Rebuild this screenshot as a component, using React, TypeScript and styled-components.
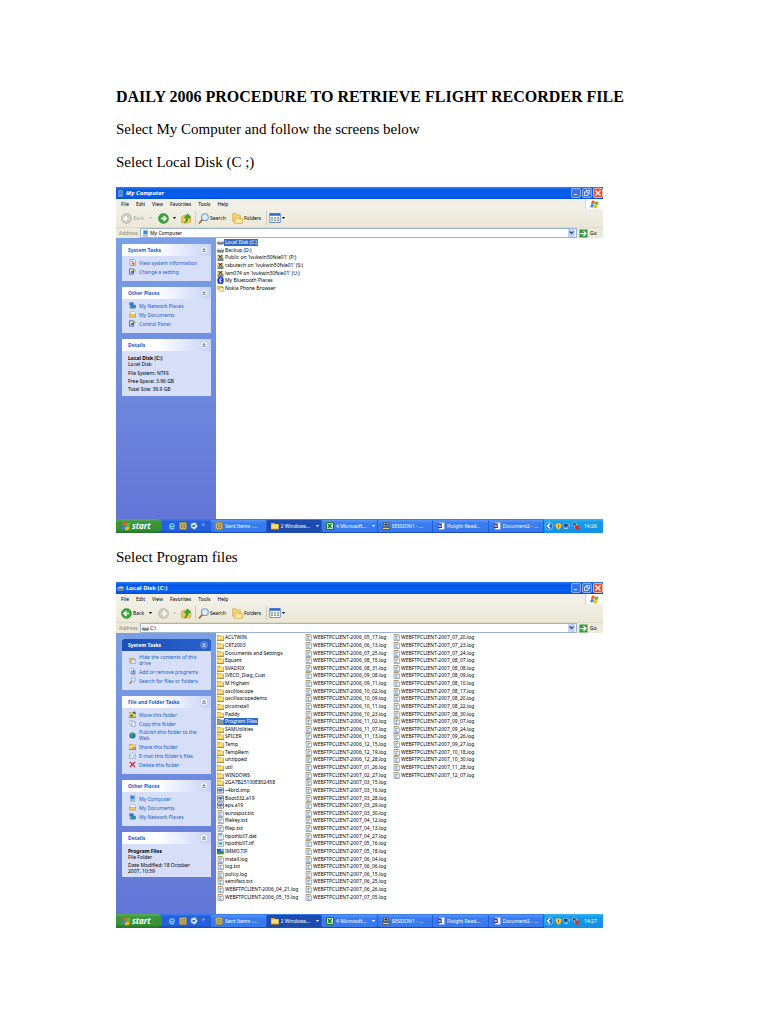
import React from "react";
import styled, { createGlobalStyle, css } from "styled-components";

const GlobalStyle = createGlobalStyle`
  * { box-sizing: border-box; }
  body { margin: 0; background: #fff; color: #000; }
  button, input { font: inherit; color: inherit; margin: 0; padding: 0; border: 0; background: none; }
  ul { list-style: none; margin: 0; padding: 0; }
  svg { display: block; flex: none; }
`;

/* ---------- document ---------- */

const Page = styled.main`
  display: flex;
  flex-direction: column;
  gap: 16px;
  padding: 88px 165px 96px 116px;
  font: 15px/17px "Liberation Serif", "Times New Roman", serif;
`;

const Title = styled.h1`
  margin: 0;
  font-size: 16px;
  line-height: 17px;
  font-weight: 700;
  white-space: nowrap;
`;

const Step = styled.p`
  margin: 0;
`;

/* ---------- window frame ---------- */

const Frame = styled.section`
  display: flex;
  flex-direction: column;
  background: #fff;
  font: 5px/6px "Noto Sans", Tahoma, sans-serif;
  white-space: nowrap;
  overflow: hidden;
`;

const TitleBar = styled.header`
  display: flex;
  align-items: center;
  gap: 2px;
  height: 12px;
  padding: 0 0 0 1px;
  color: #fff;
  background: linear-gradient(#2f7cf5, #0557e4 25%, #0560f4 75%, #0450d0);
`;

const WindowName = styled.h2<{ $italic?: boolean }>`
  flex: 1;
  margin: 0;
  font-size: 6px;
  line-height: 8px;
  font-weight: 700;
  font-style: ${(p) => (p.$italic ? "italic" : "normal")};
`;

const CaptionButton = styled.button<{ $close?: boolean }>`
  display: flex;
  align-items: center;
  justify-content: center;
  width: 10px;
  height: 10px;
  margin-left: -1px;
  border: 1px solid ${(p) => (p.$close ? "#f0b8a8" : "#8fb0f4")};
  border-radius: 2px;
  background: ${(p) => (p.$close ? "#e2502c" : "#3a72ea")};
`;

const MenuBar = styled.nav`
  display: flex;
  align-items: center;
  gap: 7px;
  height: 10px;
  padding-left: 5px;
  background: #f1efe6;
`;

const FlagBox = styled.span`
  display: flex;
  align-items: center;
  justify-content: center;
  width: 18px;
  height: 10px;
  margin-left: auto;
  border-left: 1px solid #d8d4c4;
  background: #fff;
`;

const ToolBar = styled.div`
  display: flex;
  align-items: center;
  height: 19px;
  padding-left: 5px;
  background: linear-gradient(#f1efe6, #ebe8d7);
  border-bottom: 1px solid #dedac8;
`;

const ToolButton = styled.button<{ $width: number; $dim?: boolean }>`
  display: flex;
  align-items: center;
  gap: 1px;
  width: ${(p) => p.$width}px;
  height: 16px;
  color: ${(p) => (p.$dim ? "#a9a698" : "#000")};
`;

const Divider = styled.i`
  width: 1px;
  height: 14px;
  margin-right: 2px;
  background: #d0ccba;
`;

const AddressBar = styled.form`
  display: flex;
  align-items: center;
  height: 10px;
  padding: 0 2px 0 3px;
  background: #ece9d8;
`;

const AddressLabel = styled.label`
  width: 21px;
  color: #8b897d;
`;

const AddressField = styled.div`
  display: flex;
  flex: 1;
  align-items: center;
  gap: 1px;
  height: 10px;
  padding: 0 1px 0 1px;
  border: 1px solid #9db4cf;
  background: #fff;
`;

const AddressInput = styled.input`
  flex: 1;
  min-width: 0;
  height: 8px;
  outline: 0;
`;

const DropButton = styled.button`
  display: flex;
  align-items: center;
  justify-content: center;
  width: 7px;
  height: 8px;
  background: #c3d3fb;
`;

const GoButton = styled.button`
  display: flex;
  align-items: center;
  gap: 2px;
  width: 22px;
  height: 10px;
  margin-left: 2px;
`;

/* ---------- window body ---------- */

const Body = styled.div`
  display: flex;
  height: 281px;
`;

const SideBar = styled.aside`
  display: flex;
  flex: none;
  flex-direction: column;
  gap: 6px;
  width: 100px;
  padding: 6px 5px 0 6px;
  background: linear-gradient(#7b9fe6, #6375d6);
`;

const Panel = styled.section`
  background: #d6dff7;
`;

const PanelHead = styled.header<{ $primary?: boolean }>`
  display: flex;
  align-items: center;
  justify-content: space-between;
  height: 12px;
  padding: 0 3px 0 6px;
  border-radius: 2px 2px 0 0;
  ${(p) =>
    p.$primary
      ? css`
          color: #fff;
          background: linear-gradient(90deg, #1c4fb8, #2a60cc);
        `
      : css`
          color: #215dc6;
          background: linear-gradient(90deg, #fff 40%, #c6d3f7);
        `}
`;

const PanelName = styled.h3`
  margin: 0;
  font-size: 5px;
  line-height: 8px;
  font-weight: 700;
`;

const CollapseButton = styled.button`
  width: 8px;
  height: 8px;
`;

const TaskList = styled.ul`
  padding: 2px 2px 5px 7px;
`;

const TaskLink = styled.a`
  display: flex;
  align-items: center;
  gap: 3px;
  min-height: 9px;
  padding: 1px 0;
  color: #215dc6;
  text-decoration: none;
  white-space: pre-line;
`;

const Details = styled.div`
  display: flex;
  flex-direction: column;
  padding: 4px 6px 3px;
`;

const DetailLine = styled.p<{ $tall?: boolean }>`
  margin: 0;
  line-height: ${(p) => (p.$tall ? 8 : 6)}px;
  white-space: pre-line;
`;

const DetailGroup = styled.div`
  margin-top: 2px;
`;

const FileList = styled.ul<{ $rows: number; $height: number }>`
  display: grid;
  grid-auto-flow: column;
  grid-template-rows: repeat(${(p) => p.$rows}, 1fr);
  grid-auto-columns: 88px;
  height: ${(p) => p.$height}px;
  padding: 1px 0 0 1px;
`;

const FileItem = styled.li<{ $selected?: boolean }>`
  display: flex;
  align-items: center;
  min-height: 0;

  span {
    padding: 0 1px;
    line-height: 7px;
    color: ${(p) => (p.$selected ? "#fff" : "#000")};
    background: ${(p) => (p.$selected ? "#316ac5" : "transparent")};
  }
`;

/* ---------- taskbar ---------- */

const TaskBar = styled.footer`
  display: flex;
  height: 14px;
  color: #fff;
  background: linear-gradient(#3a80ee, #245edb 20%, #2460dc 80%, #1b48b0);
`;

const StartButton = styled.button`
  display: flex;
  align-items: center;
  gap: 1px;
  width: 46px;
  padding-left: 5px;
  border-radius: 0 5px 5px 0;
  font-size: 8px;
  line-height: 12px;
  font-weight: 700;
  font-style: italic;
  background: linear-gradient(#58ac58, #3a963a 25%, #359235 75%, #26702a);
`;

const QuickLaunch = styled.div`
  display: flex;
  align-items: center;
  gap: 3px;
  width: 49px;
  padding-left: 6px;

  span { margin-left: 1px; line-height: 4px; padding-bottom: 4px; }
`;

const TaskButton = styled.button<{ $active?: boolean }>`
  display: flex;
  flex: 1;
  align-items: center;
  gap: 2px;
  min-width: 0;
  height: 12px;
  margin: 1px 1px 0 0;
  padding: 0 2px 0 4px;
  border-radius: 1px;
  background: ${(p) => (p.$active ? "#1d4cae" : "linear-gradient(#5a97fa, #3a7cf1 25%, #3878ec)")};

  span { flex: 1; text-align: left; overflow: hidden; }
`;

const Tray = styled.div`
  display: flex;
  align-items: center;
  gap: 1px;
  width: 59px;
  background: linear-gradient(#35b2f3, #129bea 25%, #1290e4);

  time { margin-left: 3px; }
`;

/* ---------- icons ---------- */

type IconName =
  | "computer" | "disk" | "netdisk" | "bluetooth" | "phone" | "folder" | "folderSel" | "text" | "bin" | "image" | "dat" | "tif"
  | "info" | "setting" | "network" | "docs" | "hide" | "addrem" | "search" | "move" | "copy" | "publish" | "share" | "mail"
  | "delete" | "ie" | "outlook" | "desktop" | "excel" | "session" | "word" | "shield" | "monitors" | "offline" | "flag"
  | "folderUp" | "folders" | "views";

const folderShape = (fill: string, edge: string) => (
  <>
    <path d="M0 2h7l2 2h7v11H0z" fill={edge} />
    <path d="M1 5h13v8H1z" fill={fill} />
    <path d="M0 14h16v1.500H0z" fill="#8a6a20" />
  </>
);

const screen = (
  <>
    <path d="M3 1h10v9H3z" fill="#dfe6ee" stroke="#587090" />
    <path d="M4 2h8v7H4z" fill="#2f8ae8" />
    <path d="M2 12h12v3H2z" fill="#9aa8b8" />
  </>
);

const drive = (
  <>
    <path d="M0 7l4-3h10l2 3v4l-3 2H3l-3-2z" fill="#7f8890" />
    <path d="M1 7l5-3h8l1 3z" fill="#e4e8ec" />
    <path d="M10 10h3v1h-3z" fill="#4c4" />
  </>
);

const page = <path d="M2.500 1h9l3 3v11h-12z" fill="#fff" stroke="#6c7f9c" strokeWidth="1.500" />;

const drawings: Record<IconName, React.ReactNode> = {
  computer: screen,
  disk: drive,
  netdisk: (
    <>
      <path d="M1 2h13v6H1z" fill="#e0bf3c" />
      <path d="M3 3l9 6M12 2L5 9" stroke="#222" strokeWidth="2" />
      <path d="M1 9h14v4H1z" fill="#8d949c" />
      <path d="M1 13h14v2H1z" fill="#222" />
    </>
  ),
  bluetooth: (
    <>
      <rect x="1" y="0" width="14" height="16" rx="5" fill="#1226d8" />
      <path d="M4 5l7 6-3.500 3V2L11 5l-7 6" fill="none" stroke="#fff" strokeWidth="1.500" />
    </>
  ),
  phone: (
    <>
      <path d="M0 2h9v9H0z" fill="#e9c542" />
      <path d="M5 6h10v9H5z" fill="#f6eeb4" stroke="#b89a40" />
      <path d="M10 1l5 5h-5z" fill="#2a9a3a" />
    </>
  ),
  folder: folderShape("#fbdf78", "#dba834"),
  folderSel: folderShape("#7f9fa8", "#5c7f90"),
  text: (
    <>
      {page}
      <path d="M2 0h11v3H2z" fill="#b59a6a" />
      <path d="M5 6h7M5 9h4M5 12h6" stroke="#3f7390" strokeWidth="1.500" />
    </>
  ),
  bin: (
    <>
      <path d="M1 2h14v12H1z" fill="#fff" stroke="#5a6f94" strokeWidth="2" />
      <path d="M3 5h10v4H3z" fill="#3463b8" />
      <path d="M5 10h5v2H5z" fill="#b33" />
    </>
  ),
  image: (
    <>
      <path d="M0 2h15v12H0z" fill="#1c5fc8" />
      <path d="M0 10l5-4 5 4 2-2 3 3v3H0z" fill="#2b9a40" />
      <circle cx="11" cy="5" r="2" fill="#fff" />
    </>
  ),
  dat: (
    <>
      {page}
      <path d="M4 3h8v2H4z" fill="#3463b8" />
      <path d="M5 8h6M5 11h6" stroke="#99a" />
    </>
  ),
  tif: (
    <>
      {page}
      <path d="M5 5h7v6H5z" fill="#46b0a0" />
    </>
  ),
  info: (
    <>
      {page}
      <path d="M5 4h5v2H5z" fill="#3c6fd0" />
      <path d="M7 8h5v5H7z" fill="#d04a2a" />
    </>
  ),
  setting: (
    <>
      <path d="M1 2h9v12H1z" fill="#fff" stroke="#3a5f9c" strokeWidth="2" />
      <path d="M3 8h3V5l6 4-6 4v-3H3z" fill="#35579a" />
      <path d="M11 3h4v5h-4z" fill="#d9a62e" />
    </>
  ),
  network: (
    <>
      <path d="M1 1h9v7H1z" fill="#2c6fd8" stroke="#7d94b4" />
      <path d="M6 7h9v7H6z" fill="#1e9a8a" stroke="#3a5f9c" />
      <circle cx="5" cy="12" r="3" fill="#2a8ad8" />
    </>
  ),
  docs: (
    <>
      <path d="M4 1h8l2 3v8H4z" fill="#fff" stroke="#7d94b4" />
      <path d="M1 7h4l1 1h9v6H1z" fill="#f2cb58" stroke="#a97e20" />
    </>
  ),
  hide: (
    <>
      <path d="M1 3h11v10H1z" fill="#f2cb58" stroke="#8b7a50" />
      <path d="M5 6h10v9H5z" fill="#dfe7f6" stroke="#6c7f9c" />
    </>
  ),
  addrem: (
    <>
      <path d="M2 1h8v11H2z" fill="#fff" stroke="#6c7f9c" />
      <path d="M6 6h8v8H6z" fill="#7c9fe0" stroke="#45659c" />
      <path d="M8 10h4" stroke="#fff" />
    </>
  ),
  search: (
    <>
      <circle cx="10" cy="6" r="5" fill="#d4ecfb" stroke="#6f9ccc" strokeWidth="1.500" />
      <path d="M6 10l-4 4.500" stroke="#a8683c" strokeWidth="2.500" strokeLinecap="round" />
    </>
  ),
  move: (
    <>
      {folderShape("#fbdf78", "#d9a62e")}
      <path d="M5 9V6l6 4-6 5v-3H2V9z" fill="#2b9a40" />
      <circle cx="12" cy="4" r="3" fill="#35579a" />
    </>
  ),
  copy: (
    <>
      <path d="M2 1h7v10H2z" fill="#fff" stroke="#6c7f9c" />
      <path d="M6 4h8v11H6z" fill="#eef3fc" stroke="#45659c" />
    </>
  ),
  publish: (
    <>
      <circle cx="8" cy="8" r="7" fill="#2468c8" />
      <path d="M4 3l6-1 2 3-4 3 1 5-3-1-2-4z" fill="#35b048" />
    </>
  ),
  share: (
    <>
      {folderShape("#fbdf78", "#d9a62e")}
      <path d="M8 9h7v5H8z" fill="#c98b62" />
    </>
  ),
  mail: (
    <>
      <path d="M1 6l7-5 7 5v9H1z" fill="#e8effa" stroke="#5c7fb4" />
      <path d="M1 7l7 5 7-5" fill="none" stroke="#5c7fb4" />
    </>
  ),
  delete: <path d="M2 2l12 12M14 2L2 14" stroke="#c4252b" strokeWidth="3" />,
  ie: (
    <>
      <path d="M13 9H4M13 8a5 5 0 1 0-1 4" fill="none" stroke="#7cd0ff" strokeWidth="2.500" />
      <path d="M1 13C4 8 10 2 15 2" fill="none" stroke="#3aa0f0" strokeWidth="1.500" />
    </>
  ),
  outlook: (
    <>
      <path d="M1 1h14v14H1z" fill="#e8d06a" stroke="#8a6d10" />
      <circle cx="8" cy="8" r="4" fill="#fff6c8" stroke="#5c4a0c" strokeWidth="1.500" />
      <path d="M2 2l12 12M14 2L2 14" stroke="#5c4a0c" />
    </>
  ),
  desktop: (
    <>
      <path d="M2 3l9-2 4 8-6 6-7-4z" fill="#d8ecff" stroke="#78a8e0" />
      <path d="M5 6h5v4H5z" fill="#2a6fc8" />
      <path d="M9 9l5-7" stroke="#d98a2e" strokeWidth="1.500" />
    </>
  ),
  excel: (
    <>
      <path d="M1 1h14v14H1z" fill="#cfe8cf" stroke="#14702c" strokeWidth="2" />
      <path d="M4 4l7 8M11 4l-7 8" stroke="#14702c" strokeWidth="2.500" />
    </>
  ),
  session: (
    <>
      <path d="M3 1h10v8H3z" fill="#d8d8c8" stroke="#222" />
      <path d="M5 3h6v4H5z" fill="#123" />
      <path d="M1 11h14v4H1z" fill="#e0cf7c" stroke="#222" />
    </>
  ),
  word: (
    <>
      <path d="M4 1h11v14H4z" fill="#fff" stroke="#8894c8" />
      <path d="M1 3h9v9H1z" fill="#2c3c98" />
      <path d="M2 5l2 5 1.500-4L7 10l2-5" fill="none" stroke="#fff" />
    </>
  ),
  shield: (
    <>
      <path d="M8 0l7 3c0 6-2 10-7 13C3 13 1 9 1 3z" fill="#f6c829" />
      <path d="M7 4h2v5H7zM7 10h2v2H7z" fill="#7a5300" />
    </>
  ),
  monitors: (
    <>
      <path d="M1 3h9v7H1z" fill="#24407c" stroke="#cfd8e8" />
      <path d="M3 12h6v2H3z" fill="#cfd8e8" />
      <path d="M12 3c2 2 2 4 0 6" fill="none" stroke="#fff" />
    </>
  ),
  offline: (
    <>
      <path d="M1 2h8v6H1zM5 6h8v6H5z" fill="#24407c" stroke="#cfd8e8" />
      <path d="M7 8l7 7M14 8l-7 7" stroke="#e0281e" strokeWidth="2.500" />
    </>
  ),
  flag: (
    <>
      <path d="M3 2c2-1.500 3.500-1 5.500 0L7.300 7.500c-2-1-3.500-1-5.500 0z" fill="#ea5b28" />
      <path d="M9 2.500c2 1 3.500 1 6.500 0L14 8c-2 1-4 1-6.200 0z" fill="#6cb52c" />
      <path d="M1.500 8.200c2-1 3.500-1 5.500 0L5.700 13.500c-2-1-3.500-1-5.500 0z" fill="#3f82e0" />
      <path d="M7.600 8.700c2 1 4 1 6.200 0l-1.500 5.500c-2 1-4 1-6.200 0z" fill="#f5b91c" />
    </>
  ),
  folderUp: (
    <>
      <path d="M1 5l5-2 2 2 6-1v9l-7 2-6-1z" fill="#f2cb58" stroke="#c89a28" />
      <path d="M5 14c5-1 5-4 5-7h4L9.500 1 5 7h2.500c0 3 0 5-2.500 7z" fill="#35a93c" stroke="#1c7a28" strokeWidth=".7" />
    </>
  ),
  folders: (
    <>
      <path d="M1 1h5l1 2h5v9H1z" fill="#f6d976" stroke="#cfa03a" />
      <path d="M4 7h4l1 1h6v7H4z" fill="#fbe9a4" stroke="#cfa03a" />
    </>
  ),
  views: (
    <>
      <path d="M1 2h14v12H1z" fill="#fff" stroke="#3a6ec4" />
      <path d="M1 2h14v3H1z" fill="#2f68d0" />
      <path d="M3 7h2v2H3zM11 7h2v2h-2z" fill="#3a6ec4" />
      <path d="M7 7h2v2H7zM3 10h2v2H3z" fill="#3a9c54" />
      <path d="M7 10h2v2H7zM11 10h2v2h-2z" fill="#c0562e" />
    </>
  ),
};

const Icon = ({ name, size = 7 }: { name: IconName; size?: number }) => (
  <svg width={size} height={size} viewBox="0 0 16 16" aria-hidden="true">
    {drawings[name]}
  </svg>
);

const NavCircle = ({ back, enabled }: { back?: boolean; enabled: boolean }) => (
  <svg width="11" height="11" viewBox="0 0 22 22" aria-hidden="true">
    <circle cx="11" cy="11" r="10" fill={enabled ? "#3aa53a" : "#cfcdc3"} stroke={enabled ? "#25822a" : "#a9a79e"} />
    <path
      d={back ? "M16 11H7M11 6l-5 5 5 5" : "M6 11h9M11 6l5 5-5 5"}
      fill="none"
      stroke="#fff"
      strokeWidth="3"
    />
  </svg>
);

const Caret = ({ color = "#000" }: { color?: string }) => (
  <svg width="3" height="2" viewBox="0 0 6 4" aria-hidden="true">
    <path d="M0 0h6L3 4z" fill={color} />
  </svg>
);

const Chevrons = ({ primary }: { primary?: boolean }) => (
  <svg width="8" height="8" viewBox="0 0 16 16" aria-hidden="true">
    <circle cx="8" cy="8" r="7" fill={primary ? "#3f70d4" : "#fff"} stroke={primary ? "#8eacec" : "#a8b8dc"} />
    <path d="M5 8l3-3 3 3M5 12l3-3 3 3" fill="none" stroke={primary ? "#fff" : "#2f4f9c"} strokeWidth="2" />
  </svg>
);

/* ---------- composed parts ---------- */

type Entry = [IconName, string];

const SidePanel = ({ name, primary, children }: { name: string; primary?: boolean; children: React.ReactNode }) => (
  <Panel>
    <PanelHead $primary={primary}>
      <PanelName>{name}</PanelName>
      <CollapseButton type="button" aria-label={`Collapse ${name}`}>
        <Chevrons primary={primary} />
      </CollapseButton>
    </PanelHead>
    {children}
  </Panel>
);

const Tasks = ({ items }: { items: Entry[] }) => (
  <TaskList>
    {items.map(([icon, label]) => (
      <li key={label}>
        <TaskLink href="#">
          <Icon name={icon} />
          {label}
        </TaskLink>
      </li>
    ))}
  </TaskList>
);

const Files = ({ items, rows, height, selected }: { items: Entry[]; rows: number; height: number; selected: string }) => (
  <FileList $rows={rows} $height={height}>
    {items.map(([icon, label]) => (
      <FileItem key={label} $selected={label === selected}>
        <Icon name={icon} />
        <span>{label}</span>
      </FileItem>
    ))}
  </FileList>
);

const openTasks: { icon: IconName; label: string; active?: boolean; group?: boolean }[] = [
  { icon: "outlook", label: "Sent Items -..." },
  { icon: "folder", label: "2 Windows...", active: true, group: true },
  { icon: "excel", label: "4 Microsoft...", group: true },
  { icon: "session", label: "SESSION1 - ..." },
  { icon: "word", label: "Floight Read..." },
  { icon: "word", label: "Document2 - ..." },
];

interface ExplorerProps {
  id: string;
  name: string;
  italic?: boolean;
  icon: IconName;
  address: string;
  canGoBack: boolean;
  time: string;
  side: React.ReactNode;
  children: React.ReactNode;
}

const Explorer = ({ id, name, italic, icon, address, canGoBack, time, side, children }: ExplorerProps) => (
  <Frame aria-label={name}>
    <TitleBar>
      <Icon name={icon} />
      <WindowName $italic={italic}>{name}</WindowName>
      <CaptionButton type="button" aria-label="Minimize">
        <svg width="8" height="8" viewBox="0 0 8 8"><path d="M2 5h3v1H2z" fill="#fff" /></svg>
      </CaptionButton>
      <CaptionButton type="button" aria-label="Restore">
        <svg width="8" height="8" viewBox="0 0 16 16">
          <path d="M6 6V3h7v6h-3M3 6h7v7H3z" fill="none" stroke="#fff" strokeWidth="1.500" />
        </svg>
      </CaptionButton>
      <CaptionButton type="button" aria-label="Close" $close>
        <svg width="8" height="8" viewBox="0 0 16 16">
          <path d="M3 3l10 10M13 3L3 13" stroke="#fff" strokeWidth="2.500" />
        </svg>
      </CaptionButton>
    </TitleBar>
    <MenuBar>
      {["File", "Edit", "View", "Favorites", "Tools", "Help"].map((m) => (
        <button type="button" key={m}>{m}</button>
      ))}
      <FlagBox><Icon name="flag" size={9} /></FlagBox>
    </MenuBar>
    <ToolBar>
      <ToolButton type="button" $width={28} $dim={!canGoBack}>
        <NavCircle back enabled={canGoBack} />
        Back
      </ToolButton>
      <ToolButton type="button" $width={9} aria-label="Back history">
        <Caret color={canGoBack ? "#000" : "#b5b2a4"} />
      </ToolButton>
      <ToolButton type="button" $width={15} aria-label="Forward">
        <NavCircle enabled={!canGoBack} />
      </ToolButton>
      <ToolButton type="button" $width={8} aria-label="Forward history">
        <Caret color={canGoBack ? "#b5b2a4" : "#000"} />
      </ToolButton>
      <ToolButton type="button" $width={14} aria-label="Up">
        <Icon name="folderUp" size={11} />
      </ToolButton>
      <Divider />
      <ToolButton type="button" $width={34}>
        <Icon name="search" size={11} />
        Search
      </ToolButton>
      <ToolButton type="button" $width={34}>
        <Icon name="folders" size={11} />
        Folders
      </ToolButton>
      <Divider />
      <ToolButton type="button" $width={17} aria-label="Views">
        <Icon name="views" size={12} />
        <Caret />
      </ToolButton>
    </ToolBar>
    <AddressBar onSubmit={(e) => e.preventDefault()}>
      <AddressLabel htmlFor={id}>Address</AddressLabel>
      <AddressField>
        <Icon name={icon} />
        <AddressInput id={id} defaultValue={address} />
        <DropButton type="button" aria-label="Show addresses">
          <svg width="5" height="4" viewBox="0 0 10 8"><path d="M1 1l4 4 4-4" fill="none" stroke="#3c5687" strokeWidth="2.500" /></svg>
        </DropButton>
      </AddressField>
      <GoButton type="submit">
        <svg width="9" height="9" viewBox="0 0 18 18">
          <path d="M1 1h16v16H1z" fill="#319c3a" />
          <path d="M3 9h10M9 4l5 5-5 5" fill="none" stroke="#fff" strokeWidth="2.500" />
        </svg>
        Go
      </GoButton>
    </AddressBar>
    <Body>
      <SideBar>{side}</SideBar>
      {children}
    </Body>
    <TaskBar>
      <StartButton type="button">
        <Icon name="flag" size={10} />
        start
      </StartButton>
      <QuickLaunch>
        <Icon name="ie" size={8} />
        <Icon name="outlook" size={8} />
        <Icon name="desktop" size={8} />
        <span>»</span>
      </QuickLaunch>
      {openTasks.map((t) => (
        <TaskButton type="button" key={t.label} $active={t.active}>
          <Icon name={t.icon} size={8} />
          <span>{t.label}</span>
          {t.group && <Caret color="#fff" />}
        </TaskButton>
      ))}
      <Tray>
        <svg width="10" height="10" viewBox="0 0 20 20" aria-hidden="true">
          <circle cx="10" cy="10" r="8" fill="#1b74e0" stroke="#8fd0fa" strokeWidth="1.500" />
          <path d="M12 5l-5 5 5 5" fill="none" stroke="#fff" strokeWidth="3" />
        </svg>
        <Icon name="shield" />
        <Icon name="monitors" size={8} />
        <Icon name="offline" size={8} />
        <time>{time}</time>
      </Tray>
    </TaskBar>
  </Frame>
);

/* ---------- content ---------- */

const drives: Entry[] = [
  ["disk", "Local Disk (C:)"],
  ["disk", "Backup (D:)"],
  ["netdisk", "Public on 'lvukwin50fsie01' (P:)"],
  ["netdisk", "csbutech on 'lvukwin50fsie01' (S:)"],
  ["netdisk", "lwn074 on 'lvukwin50fsie01' (U:)"],
  ["bluetooth", "My Bluetooth Places"],
  ["phone", "Nokia Phone Browser"],
];

const folders = [
  "ACLTWIN", "CRT2003", "Documents and Settings", "Equant", "SVADFIX", "IVECO_Diag_Cust", "M Higham", "oscilloscope",
  "oscilloscopedemo", "picoinstall", "Paddy", "Program Files", "SAMUtilities", "SPICER", "Temp", "TempRem", "unzipped",
  "util", "WINDOWS", "2GA7B25100E802458",
];

const logs2006 = [
  "05_17", "06_13", "07_25", "08_15", "08_31", "09_08", "09_11", "10_02", "10_09", "10_11", "10_23", "11_02", "11_07",
  "11_13", "12_15", "12_19", "12_28",
];

const logs2007 = [
  "01_26", "02_27", "03_15", "03_16", "03_28", "03_29", "03_30", "04_12", "04_13", "04_27", "05_16", "05_18", "06_04",
  "06_06", "06_15", "06_25", "06_26", "07_05", "07_20", "07_23", "07_24", "08_07", "08_08", "08_09", "08_10", "08_17",
  "08_20", "08_22", "08_30", "09_07", "09_24", "09_26", "09_27", "10_18", "10_30", "11_28", "12_07",
];

const log = (year: number) => (day: string): Entry => ["text", `WEBFTPCLIENT-${year}_${day}.log`];

const diskFiles: Entry[] = [
  ...folders.map((f): Entry => [f === "Program Files" ? "folderSel" : "folder", f]),
  ["bin", "~4brd.tmp"],
  ["bin", "Boot332.a19"],
  ["bin", "eps.a19"],
  ["text", "eurospot.txt"],
  ["text", "filekey.txt"],
  ["text", "filep.txt"],
  ["dat", "hpothbll7.dat"],
  ["tif", "hpothbll7.tif"],
  ["image", "IMMO.TIF"],
  ["text", "install.log"],
  ["text", "log.txt"],
  ["text", "policy.log"],
  ["text", "semifact.txt"],
  ...["04_21", "05_15", ...logs2006].map(log(2006)),
  ...logs2007.map(log(2007)),
];

const computerSide = (
  <>
    <SidePanel name="System Tasks">
      <Tasks items={[["info", "View system information"], ["setting", "Change a setting"]]} />
    </SidePanel>
    <SidePanel name="Other Places">
      <Tasks items={[["network", "My Network Places"], ["docs", "My Documents"], ["setting", "Control Panel"]]} />
    </SidePanel>
    <SidePanel name="Details">
      <Details>
        <DetailLine><b>Local Disk (C:)</b></DetailLine>
        <DetailLine>Local Disk</DetailLine>
        <DetailGroup>
          <DetailLine $tall>File System: NTFS</DetailLine>
          <DetailLine $tall>Free Space: 3.96 GB</DetailLine>
          <DetailLine $tall>Total Size: 39.9 GB</DetailLine>
        </DetailGroup>
      </Details>
    </SidePanel>
  </>
);

const diskSide = (
  <>
    <SidePanel name="System Tasks" primary>
      <Tasks
        items={[
          ["hide", "Hide the contents of this\ndrive"],
          ["addrem", "Add or remove programs"],
          ["search", "Search for files or folders"],
        ]}
      />
    </SidePanel>
    <SidePanel name="File and Folder Tasks">
      <Tasks
        items={[
          ["move", "Move this folder"],
          ["copy", "Copy this folder"],
          ["publish", "Publish this folder to the\nWeb"],
          ["share", "Share this folder"],
          ["mail", "E-mail this folder's files"],
          ["delete", "Delete this folder"],
        ]}
      />
    </SidePanel>
    <SidePanel name="Other Places">
      <Tasks items={[["computer", "My Computer"], ["docs", "My Documents"], ["network", "My Network Places"]]} />
    </SidePanel>
    <SidePanel name="Details">
      <Details>
        <DetailLine><b>Program Files</b></DetailLine>
        <DetailLine>File Folder</DetailLine>
        <DetailGroup>
          <DetailLine>{"Date Modified: 18 October\n2007, 10:59"}</DetailLine>
        </DetailGroup>
      </Details>
    </SidePanel>
  </>
);

export default function App() {
  return (
    <>
      <GlobalStyle />
      <Page>
        <Title>DAILY 2006 PROCEDURE TO RETRIEVE FLIGHT RECORDER FILE</Title>
        <Step>Select My Computer and follow the screens below</Step>
        <Step>Select Local Disk (C ;)</Step>
        <Explorer
          id="address-computer"
          name="My Computer"
          italic
          icon="computer"
          address="My Computer"
          canGoBack={false}
          time="14:26"
          side={computerSide}
        >
          <Files items={drives} rows={7} height={54} selected="Local Disk (C:)" />
        </Explorer>
        <Step>Select Program files</Step>
        <Explorer
          id="address-disk"
          name="Local Disk (C:)"
          icon="disk"
          address="C:\"
          canGoBack
          time="14:27"
          side={diskSide}
        >
          <Files items={diskFiles} rows={35} height={268} selected="Program Files" />
        </Explorer>
      </Page>
    </>
  );
}
